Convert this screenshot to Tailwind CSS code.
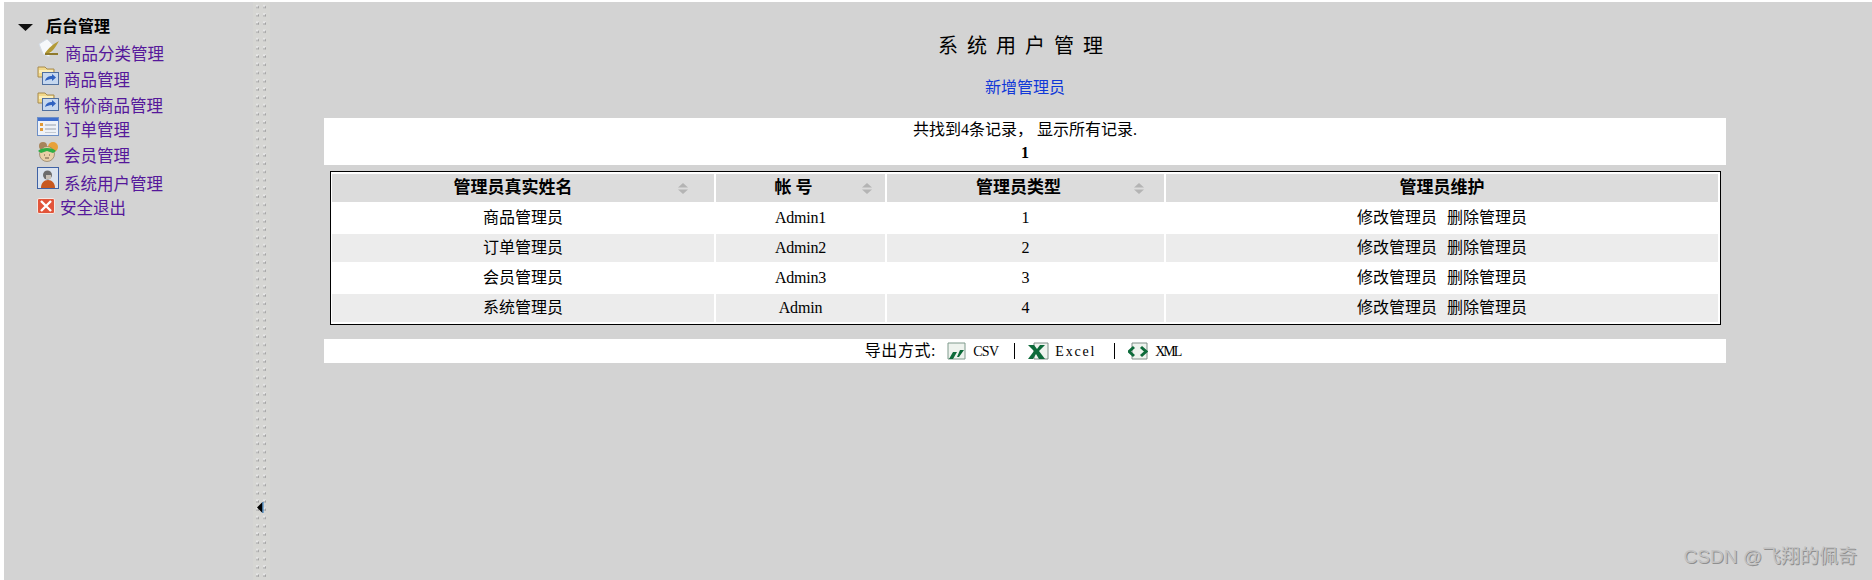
<!DOCTYPE html>
<html lang="zh-CN">
<head>
  <meta charset="UTF-8" />
  <title>系统用户管理</title>
  <script src="https://cdn.jsdelivr.net/npm/@tailwindcss/browser@4"></script>
</head>
<body class="bg-white font-['Liberation_Serif','Noto_Sans_CJK_SC',serif] text-[16px] text-black overflow-hidden">
  <div class="relative flex h-[578px] mt-[2px] ml-[4px] bg-[#d3d3d3]">

    <!-- left menu -->
    <aside class="w-[249px] shrink-0 font-['Liberation_Sans','Noto_Sans_CJK_SC',sans-serif] text-[16.5px] text-[#55189a]">
      <div class="flex items-center h-[20px] mt-[15px] pl-[14px] font-bold text-[16px] text-black">
        <svg width="15" height="7" viewBox="0 0 15 7"><path d="M0 0H15L7.500 7Z" fill="#111"/></svg>
        <span class="ml-[13px]">后台管理</span>
      </div>
      <ul class="pl-[33px] mt-[2px]">
        <li class="flex h-[27px]">
          <svg class="-mt-[1px] ml-[1px]" width="22" height="20" viewBox="0 0 22 20">
            <path d="M1 6 9 1l8 8-6 10-6-3Z" fill="#f6f8fa" stroke="#d3dbe4"/>
            <path d="M7 15c3-4 6-7 9-9l5-3-3 5c-2 3-4 6-7 7Z" fill="#b39a35"/>
            <path d="M7 16h13" stroke="#8f7a2c" stroke-width="2"/>
          </svg>
          <a class="ml-[5px] leading-[26px] mt-[2px]">商品分类管理</a>
        </li>
        <li class="flex h-[26px]">
          <svg class="-mt-[2px]" width="22" height="21" viewBox="0 0 22 21">
            <path d="M1 3h7l2 2h7v8H1Z" fill="#f2d98b" stroke="#a68a4f"/>
            <path d="M2 6h14v3H2Z" fill="#fbeebb"/>
            <rect x="5.500" y="8.500" width="16" height="12" fill="#c6d8ef" stroke="#4f6f9f"/>
            <path d="M8 17c1-4 4-5 7-5v-2l4 3.500-4 3.500v-2c-3 0-5 1-7 2Z" fill="#2f62c0"/>
          </svg>
          <a class="ml-[5px] leading-[26px] mt-[1px]">商品管理</a>
        </li>
        <li class="flex h-[25px]">
          <svg class="-mt-[2px]" width="22" height="21" viewBox="0 0 22 21">
            <path d="M1 3h7l2 2h7v8H1Z" fill="#f2d98b" stroke="#a68a4f"/>
            <path d="M2 6h14v3H2Z" fill="#fbeebb"/>
            <rect x="5.500" y="8.500" width="16" height="12" fill="#c6d8ef" stroke="#4f6f9f"/>
            <path d="M8 17c1-4 4-5 7-5v-2l4 3.500-4 3.500v-2c-3 0-5 1-7 2Z" fill="#2f62c0"/>
          </svg>
          <a class="ml-[5px] leading-[26px] mt-[1px]">特价商品管理</a>
        </li>
        <li class="flex h-[25px]">
          <svg width="22" height="19" viewBox="0 0 22 19">
            <rect x=".5" y=".5" width="21" height="18" fill="#eef2f8" stroke="#6d8fc7"/>
            <path d="M1 1h20v3H1Z" fill="#3f6fce"/>
            <path d="M3 6h3v3H3Zm0 5h3v3H3Z" fill="#e09a3a"/>
            <path d="M8 7h11v2H8Zm0 4h11v2H8Zm0 4h11v1H8Z" fill="#c3c9d2"/>
          </svg>
          <a class="ml-[5px] leading-[26px]">订单管理</a>
        </li>
        <li class="flex h-[28px]">
          <svg class="-mt-[1px]" width="22" height="21" viewBox="0 0 22 21">
            <circle cx="16" cy="6" r="5" fill="#e8a13a"/>
            <circle cx="6" cy="5" r="4" fill="#a8845a"/>
            <circle cx="10" cy="13" r="7.500" fill="#e9cfa6" stroke="#8c7a5c" stroke-width=".7"/>
            <path d="M1 10c3-4 15-4 18 0l-3 2-6-2-6 2Z" fill="#2fae45"/>
            <path d="M7 14h1m4 0h1M8 17h4" stroke="#6b5440"/>
          </svg>
          <a class="ml-[5px] leading-[26px] mt-[1px]">会员管理</a>
        </li>
        <li class="flex h-[26px]">
          <svg class="-mt-[3px]" width="22" height="22" viewBox="0 0 22 22">
            <rect x=".5" y=".5" width="21" height="21" fill="#dbe3ee" stroke="#3f62a5"/>
            <circle cx="10.500" cy="8" r="4.500" fill="#6c6c6c"/>
            <path d="M9 8h5v4H9Z" fill="#c8c0b6"/>
            <path d="M4 21c0-5 3-8 7-8s7 3 7 8Z" fill="#c8581f"/>
          </svg>
          <a class="ml-[5px] leading-[26px] mt-[1px]">系统用户管理</a>
        </li>
        <li class="flex h-[26px]">
          <svg class="mt-[2px]" width="18" height="16" viewBox="0 0 18 16">
            <rect x=".5" y=".5" width="17" height="15" rx="1.500" fill="#e2553a" stroke="#f4e8e2"/>
            <path d="M4 3l10 10M14 3 4 13" stroke="#fff" stroke-width="2.400"/>
          </svg>
          <a class="ml-[5px] leading-[26px] -mt-[1px]">安全退出</a>
        </li>
      </ul>
    </aside>

    <!-- splitter -->
    <div class="relative w-[17px] shrink-0 bg-[#d6d6d3]">
      <svg class="block" width="17" height="578">
        <defs>
          <pattern id="dots" width="17" height="8.240" patternUnits="userSpaceOnUse">
            <rect x="3" y="3" width="3" height="3" fill="#e8e8e8"/>
            <rect x="10" y="3" width="3" height="3" fill="#e8e8e8"/>
            <rect x="5" y="4" width="1" height="2" fill="#a0a0a0"/>
            <rect x="12" y="4" width="1" height="2" fill="#a0a0a0"/>
            <rect x="3" y="5" width="3" height="1" fill="#a0a0a0"/>
            <rect x="10" y="5" width="3" height="1" fill="#a0a0a0"/>
          </pattern>
        </defs>
        <rect width="17" height="578" fill="url(#dots)"/>
      </svg>
      <svg class="absolute left-[4px] top-[500px]" width="7" height="11" viewBox="0 0 7 11">
        <path d="M5.500 0V11L0 5.500Z" fill="#000"/>
        <path d="M6 0V11" stroke="#2a7fc8"/>
      </svg>
    </div>

    <!-- main -->
    <main class="ml-[54px] w-[1402px]">
      <h1 class="mt-[32px] h-[24px] text-center text-[20px] leading-[24px] tracking-[9px] font-normal">系统用户管理</h1>
      <p class="mt-[18px] h-[24px] text-center leading-[24px]"><a class="text-[#1038d8]">新增管理员</a></p>
      <div class="mt-[18px] h-[47px] bg-white text-center">
        <p class="h-[23px] leading-[23px]">共找到4条记录， 显示所有记录.</p>
        <p class="h-[24px] leading-[24px] font-bold">1</p>
      </div>

      <div class="mt-[6px] ml-[6px] w-[1391px] border border-black bg-white px-px py-[2px] text-center">
        <div class="grid grid-cols-[382px_169px_277px_552px] gap-x-[2px]">
          <div class="relative h-[28px] leading-[28px] bg-[#dcdcdc] font-bold text-[17px] pr-[20px]">管理员真实姓名<svg class="absolute right-[26px] top-[9px]" width="10" height="11" viewBox="0 0 10 11"><path d="M5 0l5 4.500H0Zm0 11L0 6.500h10Z" fill="#b4b4b4"/></svg></div>
          <div class="relative h-[28px] leading-[28px] bg-[#dcdcdc] font-bold text-[17px] pr-[14px]">帐 号<svg class="absolute right-[13px] top-[9px]" width="10" height="11" viewBox="0 0 10 11"><path d="M5 0l5 4.500H0Zm0 11L0 6.500h10Z" fill="#b4b4b4"/></svg></div>
          <div class="relative h-[28px] leading-[28px] bg-[#dcdcdc] font-bold text-[17px] pr-[14px]">管理员类型<svg class="absolute right-[20px] top-[9px]" width="10" height="11" viewBox="0 0 10 11"><path d="M5 0l5 4.500H0Zm0 11L0 6.500h10Z" fill="#b4b4b4"/></svg></div>
          <div class="h-[28px] leading-[28px] bg-[#dcdcdc] font-bold text-[17px]">管理员维护</div>

          <div class="h-[32px] leading-[32px]">商品管理员</div>
          <div class="h-[32px] leading-[32px] -tracking-[0.2px]">Admin1</div>
          <div class="h-[32px] leading-[32px]">1</div>
          <div class="h-[32px] leading-[32px]"><a>修改管理员</a><a class="ml-[10px]">删除管理员</a></div>

          <div class="h-[28px] leading-[28px] bg-[#ececec]">订单管理员</div>
          <div class="h-[28px] leading-[28px] bg-[#ececec] -tracking-[0.2px]">Admin2</div>
          <div class="h-[28px] leading-[28px] bg-[#ececec]">2</div>
          <div class="h-[28px] leading-[28px] bg-[#ececec]"><a>修改管理员</a><a class="ml-[10px]">删除管理员</a></div>

          <div class="h-[32px] leading-[32px]">会员管理员</div>
          <div class="h-[32px] leading-[32px] -tracking-[0.2px]">Admin3</div>
          <div class="h-[32px] leading-[32px]">3</div>
          <div class="h-[32px] leading-[32px]"><a>修改管理员</a><a class="ml-[10px]">删除管理员</a></div>

          <div class="h-[28px] leading-[28px] bg-[#ececec]">系统管理员</div>
          <div class="h-[28px] leading-[28px] bg-[#ececec] -tracking-[0.2px]">Admin</div>
          <div class="h-[28px] leading-[28px] bg-[#ececec]">4</div>
          <div class="h-[28px] leading-[28px] bg-[#ececec]"><a>修改管理员</a><a class="ml-[10px]">删除管理员</a></div>
        </div>
      </div>

      <!-- export bar -->
      <div class="mt-[14px] flex h-[24px] items-center justify-center bg-white text-[14px] pr-[5px]">
        <span class="text-[16px] tracking-[0.6px]">导出方式:</span>
        <svg class="ml-[11px]" width="19" height="18" viewBox="0 0 19 18">
          <path d="M1 1h17v16H1Z" fill="#eef3ee" stroke="#7f9a8c"/>
          <path d="M2 17l4-7h4l-4 7Zm8-2 3-7h4l-5 7Z" fill="#0d6b3a"/>
        </svg>
        <span class="ml-[7px] -tracking-[0.7px]">CSV</span>
        <span class="ml-[16px] h-[16px] w-px bg-black"></span>
        <svg class="ml-[13px]" width="21" height="18" viewBox="0 0 21 18">
          <path d="M6 1h14v16H6Z" fill="#eef3ee" stroke="#7f8f88"/>
          <path d="M0 3h6l3 4 3-4h5l-6 6 6 8h-6l-3-5-3 5H0l6-8Z" fill="#0d6b3a"/>
        </svg>
        <span class="ml-[6px] tracking-[1.8px]">Excel</span>
        <span class="ml-[18px] h-[16px] w-px bg-black"></span>
        <svg class="ml-[13px]" width="20" height="18" viewBox="0 0 20 18">
          <path d="M4 1h15v16H4Z" fill="#eef3ee" stroke="#7f8f88"/>
          <path d="M6 5 1 9.500 6 14m7-9 5 4.500L13 14" fill="none" stroke="#0d6b3a" stroke-width="3"/>
        </svg>
        <span class="ml-[7px] -tracking-[2px]">XML</span>
      </div>
    </main>

    <div class="absolute right-[15px] bottom-[12px] font-['Liberation_Sans','Noto_Sans_CJK_SC',sans-serif] text-[19px] leading-[22px] text-[#c2c2c2] [text-shadow:1px_1px_0_#8f8f8f]">CSDN @飞翔的佩奇</div>
  </div>
</body>
</html>
